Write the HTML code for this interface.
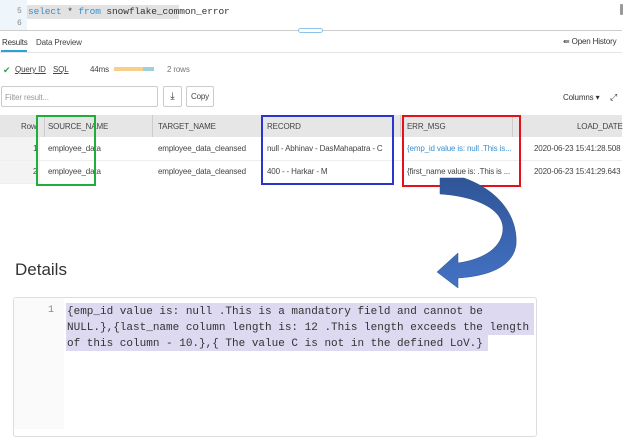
<!DOCTYPE html>
<html><head><meta charset="utf-8"><style>
*{margin:0;padding:0;box-sizing:border-box}
body{width:635px;height:429px;background:#fff;position:relative;overflow:hidden;font-family:"Liberation Sans",sans-serif;font-size:8.5px;color:#444}
.a{position:absolute;white-space:nowrap}
.t{font-size:8px;letter-spacing:-0.15px}
.mono{font-family:"Liberation Mono",monospace}
</style></head><body>
<div class="a" style="left:0;top:0;width:27px;height:30px;background:#eef5fb"></div>
<div class="a mono" style="left:17px;top:7px;font-size:8px;color:#888">5</div>
<div class="a mono" style="left:17px;top:19px;font-size:8px;color:#888">6</div>
<div class="a mono" style="left:27px;top:5px;width:152px;height:14px;background:#e2e2e2"></div>
<div class="a mono" style="left:28px;top:6px;font-size:9.5px;color:#333;letter-spacing:-0.1px"><span style="color:#3a8fd0">select</span> * <span style="color:#3a8fd0">from</span> snowflake_common_error</div>
<div class="a" style="left:620px;top:4px;width:3px;height:11px;background:#999;border-radius:1px"></div>
<div class="a" style="left:0;top:30px;width:622px;height:1px;background:#ccc"></div>
<div class="a" style="left:298px;top:28px;width:25px;height:5px;border:1px solid #8cc3e6;border-radius:3px;background:#fff"></div>
<div class="a t" style="left:2px;top:38px;color:#333">Results</div>
<div class="a" style="left:1px;top:50px;width:26px;height:2px;background:#29a3d8"></div>
<div class="a t" style="left:36px;top:38px;color:#444">Data Preview</div>
<div class="a t" style="left:563px;top:37px;color:#333">⇚ Open History</div>
<div class="a" style="left:0;top:52px;width:622px;height:1px;background:#e4e4e4"></div>
<div class="a" style="left:3px;top:65px;color:#3aa04a;font-size:9px">✔</div>
<div class="a t" style="left:15px;top:65px;text-decoration:underline">Query ID</div>
<div class="a t" style="left:53px;top:65px;text-decoration:underline">SQL</div>
<div class="a t" style="left:90px;top:65px">44ms</div>
<div class="a" style="left:114px;top:67px;width:29px;height:4px;background:#f7cf8a"></div>
<div class="a" style="left:143px;top:67px;width:11px;height:4px;background:#9fd1dc"></div>
<div class="a t" style="left:167px;top:65px;color:#777">2 rows</div>
<div class="a" style="left:1px;top:86px;width:157px;height:21px;border:1px solid #ccc;border-radius:2px"></div>
<div class="a t" style="left:5px;top:93px;color:#999">Filter result...</div>
<div class="a" style="left:163px;top:86px;width:19px;height:21px;border:1px solid #ccc;border-radius:2px;text-align:center;line-height:19px;font-size:10px;color:#333">⤓</div>
<div class="a t" style="left:186px;top:86px;width:28px;height:21px;border:1px solid #ccc;border-radius:2px;text-align:center;line-height:19px">Copy</div>
<div class="a t" style="left:563px;top:93px;color:#333">Columns ▾</div>
<div class="a" style="left:610px;top:92px;color:#333;font-size:9px">⤢</div>
<div class="a" style="left:0;top:115px;width:622px;height:22px;background:#e6e6e6"></div>
<div class="a" style="left:44px;top:115px;width:1px;height:22px;background:#ccc"></div>
<div class="a" style="left:152px;top:115px;width:1px;height:22px;background:#ccc"></div>
<div class="a" style="left:400px;top:115px;width:1px;height:22px;background:#ccc"></div>
<div class="a" style="left:512px;top:115px;width:1px;height:22px;background:#ccc"></div>
<div class="a t" style="left:21px;top:122px">Row</div>
<div class="a t" style="left:48px;top:122px">SOURCE_NAME</div>
<div class="a t" style="left:158px;top:122px">TARGET_NAME</div>
<div class="a t" style="left:267px;top:122px">RECORD</div>
<div class="a t" style="left:407px;top:122px">ERR_MSG</div>
<div class="a t" style="left:577px;top:122px">LOAD_DATE</div>
<div class="a" style="left:0;top:137px;width:40px;height:46px;background:#f3f3f3"></div>
<div class="a" style="left:0;top:160px;width:622px;height:1px;background:#eee"></div>
<div class="a" style="left:0;top:183px;width:40px;height:1px;background:#eee"></div>
<div class="a t" style="left:33px;top:144px">1</div>
<div class="a t" style="left:33px;top:167px">2</div>
<div class="a t" style="left:48px;top:144px">employee_data</div>
<div class="a t" style="left:48px;top:167px">employee_data</div>
<div class="a t" style="left:158px;top:144px">employee_data_cleansed</div>
<div class="a t" style="left:158px;top:167px">employee_data_cleansed</div>
<div class="a t" style="left:267px;top:144px">null - Abhinav - DasMahapatra - C</div>
<div class="a t" style="left:267px;top:167px">400 - - Harkar - M</div>
<div class="a t" style="left:407px;top:144px;color:#3a8fd0">{emp_id value is: null .This is...</div>
<div class="a t" style="left:407px;top:167px">{first_name value is: .This is ...</div>
<div class="a t" style="left:534px;top:144px">2020-06-23 15:41:28.508</div>
<div class="a t" style="left:534px;top:167px">2020-06-23 15:41:29.643</div>
<div class="a" style="left:36px;top:115px;width:60px;height:71px;border:2px solid #1fae3c"></div>
<div class="a" style="left:261px;top:115px;width:133px;height:70px;border:2px solid #2a35d0"></div>
<div class="a" style="left:402px;top:115px;width:119px;height:72px;border:2px solid #e4111b"></div>
<svg class="a" style="left:0;top:0" width="635" height="429"><defs><linearGradient id="g" x1="0" y1="0" x2="0" y2="1"><stop offset="0" stop-color="#2f5597"/><stop offset="1" stop-color="#4472c4"/></linearGradient></defs>
<path d="M440,178 L464,178 C503,192 518,220 516,245 C513,266 490,276 458,278 L458,288 L437,272 L458,253 L458,263 C486,259 503,246 503,228 C502,207 472,196 440,194 Z" fill="url(#g)" stroke="#2f528f" stroke-width="0.5"/></svg>
<div class="a" style="left:15px;top:260px;font-size:17px;color:#333">Details</div>
<div class="a" style="left:13px;top:297px;width:524px;height:140px;border:1px solid #ddd;border-radius:3px"></div>
<div class="a" style="left:14px;top:298px;width:50px;height:131px;background:#fafafa"></div>
<div class="a mono" style="left:48px;top:305px;font-size:10px;color:#888">1</div>
<div class="a" style="left:66px;top:303px;width:468px;height:32px;background:#dcd9f0"></div>
<div class="a" style="left:66px;top:335px;width:422px;height:16px;background:#dcd9f0"></div>
<div class="a mono" style="left:67px;top:304px;font-size:11px;line-height:16px;color:#333">{emp_id value is: null .This is a mandatory field and cannot be<br>NULL.},{last_name column length is: 12 .This length exceeds the length<br>of this column - 10.},{ The value C is not in the defined LoV.}</div>
</body></html>
